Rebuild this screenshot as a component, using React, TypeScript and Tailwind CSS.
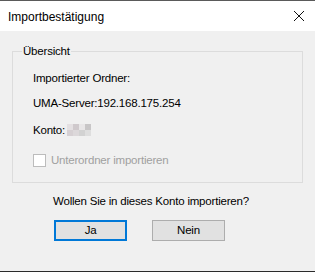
import React from "react";

const font = { fontFamily: '"Segoe UI", "Liberation Sans", Arial, sans-serif' };

function BlurredValue() {
    // verpixelter Kontoname
    const cols = [
        ["#e4e0e2", "#d6d0d3"],
        ["#cfc9cc", "#dcd8da"],
        ["#e8e6e7", "#d2d2d2"],
        ["#c8c6c7", "#dedede"],
    ];
    return (
        <span className="inline-flex ml-[2px] blur-[0.5px]">
            {cols.map((c, i) => (
                <span key={i} className="flex flex-col">
                    <span className="block w-[6px] h-[6px]" style={{ backgroundColor: c[0] }} />
                    <span className="block w-[6px] h-[6px]" style={{ backgroundColor: c[1] }} />
                </span>
            ))}
        </span>
    );
}

export default function App() {
    return (
        <div
            className="w-[315px] h-[272px] flex flex-col bg-[#f0f0f0] border-t border-t-[#5a5a5a] border-b border-b-[#2b2b2b] text-[11.5px] tracking-[-0.2px] text-black overflow-hidden"
            style={font}
        >
            {/* Titelleiste */}
            <div className="h-[30px] bg-white flex items-center justify-between pl-[8px] pr-[8px] shrink-0 tracking-normal">
                <span className="text-[12px] leading-none mt-[1px]">Importbestätigung</span>
                <svg width="12" height="12" viewBox="0 0 12 12" className="mr-[2px]">
                    <path d="M1 1L11 11M11 1L1 11" stroke="#111" strokeWidth="1" />
                </svg>
            </div>

            {/* Gruppe */}
            <fieldset className="mx-[12px] mt-[13px] border border-[#dcdcdc] h-[139px] px-[9px] pb-0">
                <legend className="px-[1px] leading-[14px]">Übersicht</legend>
                <div className="flex flex-col mt-[13px] pl-[11px]">
                    <div className="leading-[14px]">Importierter Ordner:</div>
                    <div className="leading-[14px] mt-[11px]">UMA-Server:192.168.175.254</div>
                    <div className="leading-[14px] mt-[13px] flex items-center">
                        <span>Konto:</span>
                        <BlurredValue />
                    </div>
                    <div className="flex items-center mt-[16px] text-[#a0a0a0]">
                        <div className="w-[13px] h-[13px] border border-[#bcbcbc] bg-white" />
                        <span className="ml-[5px] leading-[14px]">Unterordner importieren</span>
                    </div>
                </div>
            </fieldset>

            {/* Frage + Schaltflächen */}
            <div className="pl-[53px] mt-[11px] leading-[14px]">Wollen Sie in dieses Konto importieren?</div>
            <div className="flex pl-[54px] mt-[12px] gap-[25px]">
                <button className="w-[73px] h-[21px] bg-[#e1e1e1] border-2 border-[#0078d7] leading-none">Ja</button>
                <button className="w-[73px] h-[21px] bg-[#e1e1e1] border border-[#adadad] leading-none">Nein</button>
            </div>
        </div>
    );
}
